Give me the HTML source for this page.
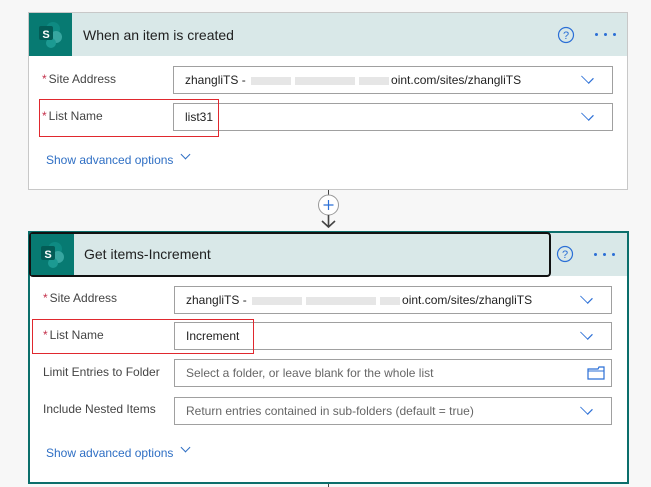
<!DOCTYPE html>
<html><head><style>
*{box-sizing:border-box;margin:0;padding:0}
body{width:651px;height:487px;background:#f7f7f7;font-family:"Liberation Sans",sans-serif;position:relative;overflow:hidden;color:#323130}
.abs{position:absolute}
.card{position:absolute;background:#fff}
.hdr{position:absolute;background:#d9e8e8}
.ico{position:absolute;background:#077a72;width:43px;height:43px}
.title{position:absolute;font-size:14px;color:#1f1f1f}
.lbl{position:absolute;font-size:12px;color:#444;left:42px}
.lbl b{color:#c4314b;font-weight:normal;margin-right:2px}
.inp{position:absolute;border:1px solid #a0a0a0;background:#fff;font-size:12px;color:#222;padding-left:11px;line-height:26px;height:28px}
.chev{position:absolute;right:20px;top:6px;width:9px;height:9px;border-right:1.3px solid #2b6fd6;border-bottom:1.3px solid #2b6fd6;transform:rotate(45deg) scale(1.2,0.8)}
.adv{position:absolute;font-size:12px;color:#2f6fc4}
.red{position:absolute;border:1px solid #e0282e}
.blur{display:inline-block;height:8px;background:#e6e6e6;vertical-align:middle;margin:0 2px}
.dots{position:absolute;width:28px;height:4px}
.dots i{position:absolute;top:0;width:3px;height:3px;border-radius:50%;background:#2b6fd6}
</style></head><body>
<!-- card 1 -->
<div class="card" style="left:28px;top:12px;width:600px;height:178px;border:1px solid #c8c8c8"></div>
<div class="hdr" style="left:29px;top:13px;width:598px;height:43px"></div>
<div class="ico" style="left:29px;top:13px"><svg width="43" height="43"><circle cx="24" cy="16" r="7" fill="#0e8a82"/><circle cx="27" cy="24" r="6" fill="#37a6a0"/><circle cx="22" cy="30" r="5" fill="#1c9a92"/><rect x="10" y="13" width="14" height="14" rx="2" fill="#035c56"/><text x="17" y="25" font-size="11" font-weight="bold" fill="#fff" text-anchor="middle" font-family="Liberation Sans">S</text></svg></div>
<div class="title" style="left:83px;top:27px">When an item is created</div>
<svg class="abs" style="left:557px;top:26px" width="18" height="18"><circle cx="9" cy="9" r="7.5" fill="none" stroke="#2b6fd6" stroke-width="1.2"/><text x="9" y="13" font-size="11" fill="#2b6fd6" text-anchor="middle" font-family="Liberation Sans">?</text></svg>
<div class="dots" style="left:595px;top:33px"><i style="left:0"></i><i style="left:9px"></i><i style="left:18px"></i></div>
<div class="lbl" style="top:72px"><b>*</b>Site Address</div>
<div class="inp" style="left:173px;top:66px;width:440px">zhangliTS - <span class="blur" style="width:40px"></span><span class="blur" style="width:60px"></span><span class="blur" style="width:30px"></span>oint.com/sites/zhangliTS<div class="chev"></div></div>
<div class="lbl" style="top:109px"><b>*</b>List Name</div>
<div class="inp" style="left:173px;top:103px;width:440px">list31<div class="chev"></div></div>
<div class="red" style="left:39px;top:99px;width:180px;height:38px"></div>
<div class="adv" style="left:46px;top:153px">Show advanced options</div>
<div class="abs" style="left:182px;top:151px;width:7px;height:7px;border-right:1px solid #2f6fc4;border-bottom:1px solid #2f6fc4;transform:rotate(45deg)"></div>
<!-- connector -->
<div class="abs" style="left:328px;top:190px;width:1px;height:6px;background:#444"></div>
<svg class="abs" style="left:316px;top:194px" width="26" height="36"><circle cx="12.5" cy="11" r="10" fill="#fff" stroke="#999"/><path d="M12.5 6v10M7.5 11h10" stroke="#2b6fd6" stroke-width="1.2"/><path d="M12.5 21v12M6 27l6.5 6 6.5-6" fill="none" stroke="#444" stroke-width="1.6"/></svg>
<!-- card 2 -->
<div class="card" style="left:28px;top:231px;width:601px;height:253px;border:2px solid #0b6e6b"></div>
<div class="abs" style="left:328px;top:484px;width:1px;height:3px;background:#444"></div>
<div class="hdr" style="left:30px;top:233px;width:597px;height:43px"></div>
<div class="abs" style="left:29px;top:232px;width:522px;height:45px;border:2px solid #111;border-radius:4px"></div>
<div class="ico" style="left:31px;top:234px;height:41px"><svg width="43" height="41"><circle cx="24" cy="15" r="7" fill="#0e8a82"/><circle cx="27" cy="23" r="6" fill="#37a6a0"/><circle cx="22" cy="29" r="5" fill="#1c9a92"/><rect x="10" y="12" width="14" height="14" rx="2" fill="#035c56"/><text x="17" y="24" font-size="11" font-weight="bold" fill="#fff" text-anchor="middle" font-family="Liberation Sans">S</text></svg></div>
<div class="title" style="left:84px;top:246px">Get items-Increment</div>
<svg class="abs" style="left:556px;top:245px" width="18" height="18"><circle cx="9" cy="9" r="7.5" fill="none" stroke="#2b6fd6" stroke-width="1.2"/><text x="9" y="13" font-size="11" fill="#2b6fd6" text-anchor="middle" font-family="Liberation Sans">?</text></svg>
<div class="dots" style="left:594px;top:253px"><i style="left:0"></i><i style="left:9px"></i><i style="left:18px"></i></div>
<div class="lbl" style="top:291px;left:43px"><b>*</b>Site Address</div>
<div class="inp" style="left:174px;top:286px;width:438px">zhangliTS - <span class="blur" style="width:50px"></span><span class="blur" style="width:70px"></span><span class="blur" style="width:20px"></span>oint.com/sites/zhangliTS<div class="chev"></div></div>
<div class="lbl" style="top:328px;left:43px"><b>*</b>List Name</div>
<div class="inp" style="left:174px;top:322px;width:438px">Increment<div class="chev"></div></div>
<div class="red" style="left:32px;top:319px;width:222px;height:35px"></div>
<div class="lbl" style="top:365px;left:43px">Limit Entries to Folder</div>
<div class="inp" style="left:174px;top:359px;width:438px;color:#666">Select a folder, or leave blank for the whole list
<svg class="abs" style="right:6px;top:6px" width="18" height="14"><path d="M1 3h10l1-2h5v12H1z" fill="none" stroke="#2b6fd6" stroke-width="1.2"/><path d="M1 5h16" stroke="#2b6fd6"/></svg></div>
<div class="lbl" style="top:402px;left:43px">Include Nested Items</div>
<div class="inp" style="left:174px;top:397px;width:438px;color:#666">Return entries contained in sub-folders (default = true)<div class="chev"></div></div>
<div class="adv" style="left:46px;top:446px">Show advanced options</div>
<div class="abs" style="left:182px;top:444px;width:7px;height:7px;border-right:1px solid #2f6fc4;border-bottom:1px solid #2f6fc4;transform:rotate(45deg)"></div>
</body></html>
